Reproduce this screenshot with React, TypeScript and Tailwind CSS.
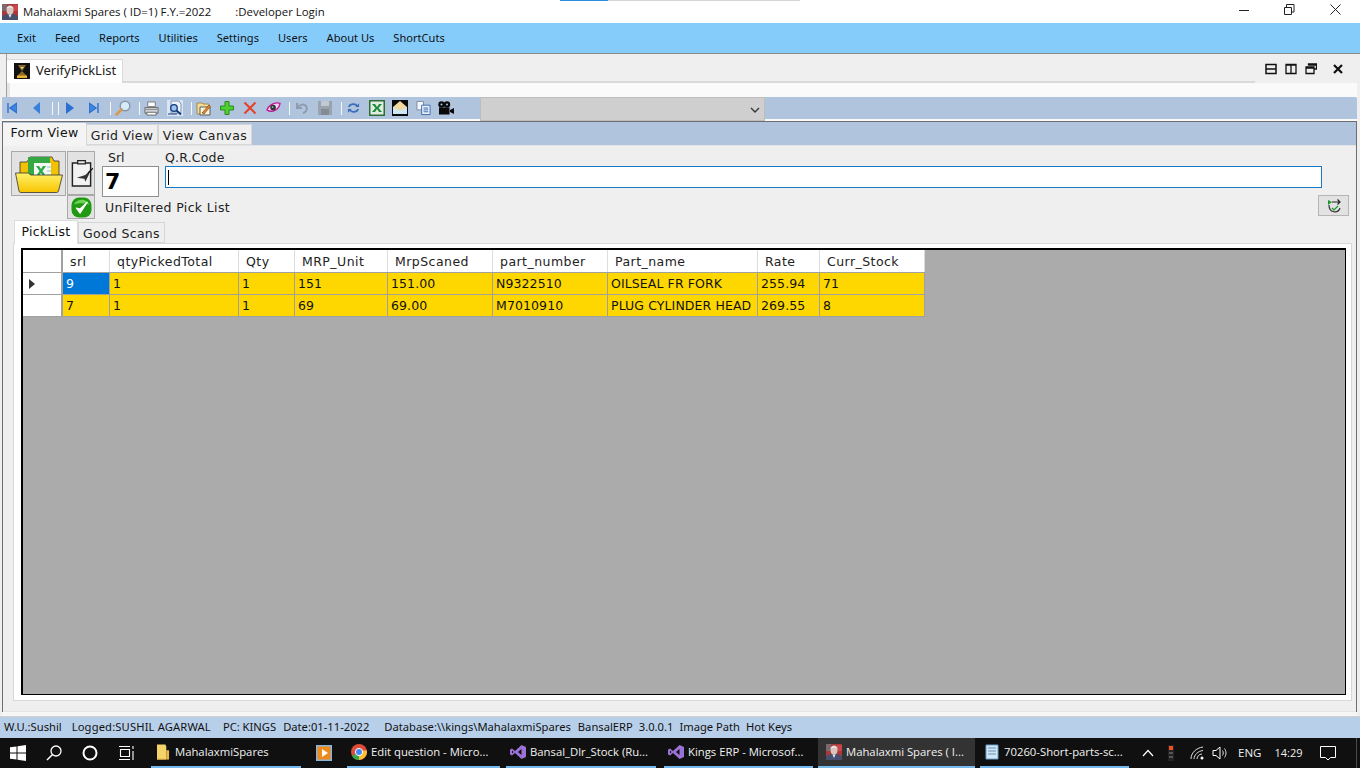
import React from "react";

const cols = [
  { t: "srl", w: "w-[47px]" },
  { t: "qtyPickedTotal", w: "w-[129px]" },
  { t: "Qty", w: "w-[56px]" },
  { t: "MRP_Unit", w: "w-[93px]" },
  { t: "MrpScaned", w: "w-[105px]" },
  { t: "part_number", w: "w-[115px]" },
  { t: "Part_name", w: "w-[150px]" },
  { t: "Rate", w: "w-[62px]" },
  { t: "Curr_Stock", w: "w-[105px]" },
];
const rows = [
  ["9", "1", "1", "151", "151.00", "N9322510", "OILSEAL FR FORK", "255.94", "71"],
  ["7", "1", "1", "69", "69.00", "M7010910", "PLUG CYLINDER HEAD", "269.55", "8"],
];
const menu = ["Exit", "Feed", "Reports", "Utilities", "Settings", "Users", "About Us", "ShortCuts"];

const Sep = ({ c }: { c: string }) => <div className={`w-px h-[13px] bg-[#f4f6fa] shrink-0 ${c}`} />;

const Face = ({ c }: { c?: string }) => (
  <svg viewBox="0 0 16 16" className={c}>
    <rect width="16" height="16" fill="#a8383a" />
    <rect x="0" y="0" width="5" height="7" fill="#7a6a70" />
    <rect x="11" y="1" width="5" height="6" fill="#c9474a" />
    <path d="M0 16v-4l5-2h6l5 2v4z" fill="#46506e" />
    <ellipse cx="8" cy="6" rx="3.5" ry="4.5" fill="#d8c4bc" />
    <path d="M4.5 4.5C5 1.5 11 1.5 11.5 4.5 9 3 7 3 4.5 4.5z" fill="#eee" />
    <path d="M6.5 10.5h3L8 14z" fill="#eee" />
  </svg>
);

const Taskbtn = ({ w, c, icon, text, active }: { w: string; c: string; icon: React.ReactNode; text: string; active?: boolean }) => (
  <div className={`h-[30px] shrink-0 flex items-center border-b-2 border-[#76b9ed] ${w} ${c} ${active ? "bg-[#333333]" : ""}`}>
    {icon}
    <span className="whitespace-nowrap ml-[4px] text-[11.3px] text-[#f2f2f2]">{text}</span>
  </div>
);

const VS = () => (
  <svg viewBox="0 0 16 16" className="w-[16px] h-[16px] ml-[4px] shrink-0">
    <path d="M11.5 1 16 3v10l-4.5 2L5 9l-3 2.5L0 10.5v-5L2 4.5 5 7zM11.5 5 8 8l3.5 3zM2 6.5v3L3.5 8z" fill="#9a72d6" />
  </svg>
);

export default function App() {
  return (
    <div className="w-[1360px] h-[768px] overflow-hidden flex flex-col bg-white text-black font-['Liberation_Sans',sans-serif]">
      {/* title bar */}
      <div className="h-[23px] shrink-0 bg-white flex relative">
        <div className="flex items-center h-[23px]">
          <Face c="w-[16px] h-[16px] ml-[2px]" />
          <span className="ml-[5px] text-[11.4px] font-['Open_Sans',sans-serif] text-[#111] whitespace-nowrap">Mahalaxmi Spares ( ID=1) F.Y.=2022</span>
          <span className="ml-[24px] text-[11.4px] font-['Open_Sans',sans-serif] text-[#111] whitespace-nowrap">:Developer Login</span>
        </div>
        <div className="absolute left-[560px] top-0 w-[48px] h-[1px] bg-[#2a8ce0]" />
        <div className="absolute left-[608px] top-0 w-[192px] h-[1px] bg-[#d4d4d4]" />
        <div className="ml-auto flex items-start pt-[3px] mr-[18px]">
          <svg viewBox="0 0 12 12" className="w-[12px] h-[12px] mr-[33px] mt-[1px]"><path d="M0 6.5h10" stroke="#222" strokeWidth="1" /></svg>
          <svg viewBox="0 0 12 12" className="w-[12px] h-[12px] mr-[34px] mt-[1px]"><path d="M.5 3.5h7v7h-7zM2.5 3.5V.5H10v7.500H7.500" fill="none" stroke="#222" /></svg>
          <svg viewBox="0 0 12 12" className="w-[12px] h-[12px] mt-[1px]"><path d="M.5.5l10 10M10.500.5l-10 10" stroke="#222" /></svg>
        </div>
      </div>
      {/* menu */}
      <div className="h-[31px] shrink-0 bg-[#85ccfb] border-b border-[#8a8a8a] flex items-center pl-[17px] gap-[19px] text-[11.1px] font-['Noto_Sans',sans-serif] text-[#111]">
        {menu.map((m) => (
          <span key={m} className="whitespace-nowrap">{m}</span>
        ))}
      </div>
      {/* MDI body */}
      <div className="flex-1 min-h-0 flex flex-col bg-[#efefef] pl-[2px] pr-[3px]">
        {/* document tab strip */}
        <div className="h-[29px] shrink-0 flex items-end ml-[4px] border-l border-[#a0a0a0]">
          <div className="w-[116px] h-[24px] bg-white border-t border-r border-[#d9d9d9] flex items-center">
            <svg viewBox="0 0 16 16" className="w-[16px] h-[16px] ml-[7px] -mt-[1px] shrink-0">
              <rect width="16" height="16" fill="#111" />
              <path d="M4 2h8L9 7l-1 1 1 1 3 3v1H4v-1l3-3 1-1-1-1z" fill="#8a6a2a" />
              <path d="M3 12.5h10V15H3z" fill="#e8b030" />
              <path d="M6 4h4L8 6z" fill="#e8d090" />
            </svg>
            <span className="ml-[6px] -mt-[1px] text-[13px] font-['Noto_Sans',sans-serif] text-[#222] whitespace-nowrap">VerifyPickList</span>
          </div>
          <div className="w-[1132px] h-[2px] bg-[#dadada]" />
          <div className="flex items-center self-start mt-[9px] ml-[10px]">
            <svg viewBox="0 0 12 12" className="w-[12px] h-[12px]"><path d="M1 1.500h10v9H1zM1 6h10" fill="none" stroke="#111" strokeWidth="1.500" /></svg>
            <svg viewBox="0 0 12 12" className="w-[12px] h-[12px] ml-[8px]"><path d="M1 1.500h10v9H1zM6 1.500v9M1 2h10" fill="none" stroke="#111" strokeWidth="1.300" /></svg>
            <svg viewBox="0 0 12 12" className="w-[12px] h-[12px] ml-[8px]"><path d="M3.500 2.500V1h8v5H9.500M1 4h8v6.500H1zM1 5h8M3.500 2h8" fill="none" stroke="#111" strokeWidth="1.300" /></svg>
            <svg viewBox="0 0 12 12" className="w-[12px] h-[12px] ml-[15px]"><path d="M2 2l8 8M10 2l-8 8" stroke="#111" strokeWidth="2.200" /></svg>
          </div>
        </div>
        <div className="h-[14px] shrink-0 bg-[#fafafa] ml-[4px] border-l border-[#a0a0a0] flex">
          <div className="w-[3px] h-full bg-[#e6e6e6]" />
        </div>
        {/* toolbar */}
        <div className="h-[22px] shrink-0 flex items-center bg-[#b0c4de] rounded-tr-[2px] pl-[5px] relative z-10">
          <svg viewBox="0 0 10 12" className="w-[10px] h-[12px] shrink-0"><path d="M1 1v10M10 1v10L3 6z" stroke="#2c6fd0" fill="#3f86e0" strokeWidth="1.400" /></svg>
          <svg viewBox="0 0 7 12" className="w-[7px] h-[12px] ml-[16px] shrink-0"><path d="M7 0v12L0 6z" fill="#3b7fdc" /></svg>
          <Sep c="ml-[12px]" />
          <Sep c="ml-[5px]" />
          <svg viewBox="0 0 8 12" className="w-[8px] h-[12px] ml-[7px] shrink-0"><path d="M0 0v12l8-6z" fill="#2c6fd0" /></svg>
          <svg viewBox="0 0 10 12" className="w-[10px] h-[12px] ml-[15px] shrink-0"><path d="M9 1v10M0 1v10l7-5z" stroke="#2c6fd0" fill="#3f86e0" strokeWidth="1.400" /></svg>
          <Sep c="ml-[11px]" />
          <svg viewBox="0 0 16 16" className="w-[16px] h-[16px] ml-[4px] shrink-0">
            <circle cx="10" cy="6" r="4.8" fill="#d6ecfb" stroke="#8a95a5" strokeWidth="1.400" />
            <path d="M6.5 9.500 1.500 14.500" stroke="#d89a4a" strokeWidth="2.600" strokeLinecap="round" />
          </svg>
          <Sep c="ml-[8px]" />
          <svg viewBox="0 0 16 16" className="w-[15px] h-[15px] ml-[4px] shrink-0">
            <path d="M4 1h8v5H4z" fill="#fff" stroke="#777" />
            <path d="M1 7h14v6H1z" fill="#cfd3d8" stroke="#666" />
            <path d="M3 12h10v3H3z" fill="#fff" stroke="#666" />
            <path d="M2 9h12" stroke="#888" />
          </svg>
          <div className="w-[16px] h-[16px] ml-[8px] bg-[#dce6f2] shrink-0 flex">
            <svg viewBox="0 0 16 16" className="w-[16px] h-[16px]">
              <path d="M4 1h8l2 3v9H4z" fill="#eef3fa" stroke="#7a94bc" />
              <circle cx="7" cy="8" r="3.300" fill="#9cc4ec" stroke="#123a7a" strokeWidth="1.300" />
              <path d="M9.500 10.500 14 14.500" stroke="#123a7a" strokeWidth="2" />
              <path d="M1 14h9" stroke="#123a7a" />
            </svg>
          </div>
          <Sep c="ml-[8px]" />
          <svg viewBox="0 0 16 16" className="w-[16px] h-[16px] ml-[4px] shrink-0">
            <path d="M1 3h5l1 1h6v10H1z" fill="#f6dd94" stroke="#a08a50" />
            <path d="M4 7h10v8H4z" fill="#fdf6dc" stroke="#5a5a5a" />
            <path d="M6 13 13 5l1.500 1.500L8 14z" fill="#e8862a" stroke="#6a3a10" strokeWidth=".6" />
          </svg>
          <svg viewBox="0 0 14 14" className="w-[14px] h-[14px] ml-[8px] shrink-0"><path d="M5 .5h4V5h4.500v4H9v4.500H5V9H.5V5H5z" fill="#4ed02e" stroke="#2a8a1a" /></svg>
          <svg viewBox="0 0 14 14" className="w-[14px] h-[14px] ml-[9px] shrink-0"><path d="M1.500 1.500l11 11M12.500 1.500l-11 11" stroke="#e8402a" strokeWidth="2" /></svg>
          <svg viewBox="0 0 16 14" className="w-[15px] h-[14px] ml-[9px] shrink-0">
            <path d="M1 9C3 3.500 10 .5 15 2c-1 6-8 11-14 7z" fill="#f2d2ec" stroke="#c2189a" strokeWidth="1.400" />
            <circle cx="7.500" cy="6.500" r="3" fill="#333" />
            <circle cx="7" cy="6" r="1" fill="#8ad0d0" />
          </svg>
          <Sep c="ml-[8px]" />
          <svg viewBox="0 0 12 12" className="w-[12px] h-[12px] ml-[6px] shrink-0"><path d="M1 1v5h5M1.500 5.500C4 2 9 1.500 10.500 5c1 3-1 5.500-3.500 6" fill="none" stroke="#8f9caf" strokeWidth="2" /></svg>
          <svg viewBox="0 0 14 14" className="w-[14px] h-[14px] ml-[10px] shrink-0">
            <path d="M0 0h14v14H0z" fill="#9aa2ad" />
            <path d="M3 0h8v5H3z" fill="#c3c9d1" />
            <path d="M3 8h8v6H3z" fill="#838b96" />
          </svg>
          <Sep c="ml-[9px]" />
          <svg viewBox="0 0 14 12" className="w-[13px] h-[12px] ml-[5px] shrink-0">
            <path d="M2 5C3 1.500 9 .5 11 4M12 7c-1 3.500-7 4.500-9 1" fill="none" stroke="#3b6cb8" strokeWidth="1.800" />
            <path d="M9 5h4V1zM5 7H1v4z" fill="#3b6cb8" />
          </svg>
          <svg viewBox="0 0 16 16" className="w-[16px] h-[16px] ml-[9px] shrink-0">
            <rect width="16" height="16" fill="#2f6b34" />
            <rect x="1.500" y="1.500" width="13" height="13" fill="#dfeee0" />
            <path d="M3 4h3l2 3 2-3h3l-3.500 4L13 12h-3L8 9l-2 3H3l3.500-4z" fill="#1e8a3a" />
          </svg>
          <svg viewBox="0 0 16 16" className="w-[16px] h-[16px] ml-[7px] shrink-0">
            <rect width="16" height="16" fill="#0a0a0a" />
            <path d="M1 7 8 1l7 6v7H1z" fill="#f0d8a0" />
            <path d="M1 14V7l7 4 7-4v7z" fill="#cfe6f6" />
          </svg>
          <svg viewBox="0 0 16 16" className="w-[15px] h-[16px] ml-[8px] shrink-0">
            <path d="M1 1h7v9H1z" fill="#f4f7fb" stroke="#7a8aa8" />
            <path d="M6 5h9v10H6z" fill="#e8f0fb" stroke="#3a68b0" />
            <path d="M8 8h5M8 10h5M8 12h5" stroke="#3a68b0" />
          </svg>
          <svg viewBox="0 0 16 14" className="w-[16px] h-[14px] ml-[7px] shrink-0">
            <circle cx="3.500" cy="3.500" r="3.200" fill="#0a0a0a" />
            <circle cx="9" cy="3.500" r="3.200" fill="#0a0a0a" />
            <circle cx="3.500" cy="3.500" r="1" fill="#b0c4de" />
            <circle cx="9" cy="3.500" r="1" fill="#b0c4de" />
            <rect x="1" y="6.500" width="10.500" height="7" fill="#0a0a0a" />
            <path d="M12 9l4-2v6l-4-2z" fill="#0a0a0a" />
          </svg>
          <div className="w-[285px] h-[24px] self-start ml-[26px] bg-[#cfcfcf] border border-[#bdbdbd] shrink-0 flex items-center justify-end pr-[4px]">
            <svg viewBox="0 0 10 6" className="w-[10px] h-[6px] mt-[2px]"><path d="M1 1l4 4 4-4" fill="none" stroke="#333" strokeWidth="1.300" /></svg>
          </div>
        </div>
        <div className="h-[2px] shrink-0 bg-[#fafafa]" />
        {/* outer tab control */}
        <div className="h-[591px] shrink-0 flex flex-col border-t border-l border-r border-[#6e6e6e] bg-[#efefef] font-['DejaVu_Sans',sans-serif]">
          <div className="h-[23px] shrink-0 bg-[#b0c4de] flex items-end text-[12.5px] tracking-[0.3px]">
            <div className="w-[83px] h-[23px] bg-[#f4f4f4] flex items-center justify-center -mb-px relative z-10">
              <span className="whitespace-nowrap -mt-[3px] text-[#111]">Form View</span>
            </div>
            <div className="w-[72px] h-[21px] bg-[#efefef] border border-[#d6d6d6] flex items-center justify-center pt-[3px]">
              <span className="whitespace-nowrap text-[#222]">Grid View</span>
            </div>
            <div className="w-[94px] h-[21px] bg-[#efefef] border border-[#d6d6d6] flex items-center justify-center pt-[3px]">
              <span className="whitespace-nowrap text-[#222] tracking-[0.45px]">View Canvas</span>
            </div>
          </div>
          {/* form */}
          <div className="flex-1 min-h-0 flex flex-col border-t border-[#e4e4e4] pl-[8px] border-b border-[#c4c4c4]">
            <div className="h-[74px] shrink-0 flex pt-[5px] pr-[7px]">
              <div className="w-[55px] h-[45px] shrink-0 bg-[#e2e2e2] border border-[#a9a9a9] flex items-center justify-center">
                <svg viewBox="0 0 48 38" className="w-[48px] h-[38px]">
                  <defs>
                    <linearGradient id="fold" x1="0" y1="0" x2="0" y2="1">
                      <stop offset="0" stopColor="#fff26a" />
                      <stop offset="1" stopColor="#f7c400" />
                    </linearGradient>
                  </defs>
                  <path d="M5 7h7l3-5h22l2 4h5v22H5z" fill="#f2c200" stroke="#333" strokeWidth=".8" />
                  <path d="M13 2h22v24H13z" fill="#35a845" />
                  <path d="M19 8h17v20H19z" fill="#f4f8f2" />
                  <path d="M21 11h3l2 3 2-3h3l-3.500 5 3.500 5h-3l-2-3-2 3h-3l3.500-5z" fill="#2fa84a" />
                  <path d="M32 12h4M32 16h4M32 20h4" stroke="#8ac8e0" />
                  <path d="M.5 18h13l2 2h32l-4 16a2 2 0 0 1-2 1.500H6a2 2 0 0 1-2-1.500z" fill="url(#fold)" stroke="#333" strokeWidth=".8" />
                </svg>
              </div>
              <div className="w-[28px] shrink-0 ml-[1px] flex flex-col">
                <div className="h-[44px] bg-[#e2e2e2] border border-[#a9a9a9] flex items-center justify-center">
                  <svg viewBox="0 0 24 30" className="w-[23px] h-[30px]">
                    <path d="M2.5 4.500h19v24h-19z" fill="#f2f2f2" stroke="#222" strokeWidth="1.500" />
                    <path d="M8 2h8v3.500H8z" fill="#e8e8e8" stroke="#222" strokeWidth="1.300" />
                    <path d="M22 11 16 17l-9 3 8 1 1 3 3-6z" fill="#333" />
                    <path d="M24 10l-5 5" stroke="#111" strokeWidth="1.200" />
                  </svg>
                </div>
                <div className="h-[24px] bg-[#e2e2e2] border border-[#a9a9a9] flex items-center justify-center">
                  <svg viewBox="0 0 22 22" className="w-[21px] h-[21px]">
                    <rect x=".5" y=".5" width="21" height="21" rx="8" fill="#1f9a12" />
                    <path d="M3 8C6 1 17 1 19 8 14 6 8 6 3 8z" fill="#6fd45a" />
                    <path d="M5.500 11.500 9.500 17 17 5.500l-7.500 7z" fill="#fff" stroke="#fff" strokeWidth="1.200" strokeLinejoin="round" />
                  </svg>
                </div>
              </div>
              <div className="flex-1 min-w-0 flex flex-col ml-[7px]">
                <div className="h-[46px] shrink-0 flex">
                  <div className="w-[57px] shrink-0 flex flex-col">
                    <span className="h-[15px] pl-[6px] -mt-[1px] mb-[1px] text-[12.5px] leading-[15px] text-[#222]">Srl</span>
                    <div className="h-[31px] bg-white border border-[#8f8f8f] flex items-center pl-[2px] text-[22px] font-bold text-black">7</div>
                  </div>
                  <div className="flex-1 min-w-0 flex flex-col ml-[6px] pr-[27px]">
                    <span className="h-[15px] -mt-[1px] mb-[1px] text-[12.5px] leading-[15px] text-[#222] tracking-[0.2px]">Q.R.Code</span>
                    <div className="h-[22px] bg-white border border-[#1a78c2] flex items-center pl-[2px]">
                      <div className="w-px h-[15px] bg-black" />
                    </div>
                  </div>
                </div>
                <div className="flex items-start -mt-[2px]">
                  <span className="ml-[3px] mt-[5px] text-[12.5px] leading-[15px] text-[#222] tracking-[0.35px]">UnFiltered Pick List</span>
                  <div className="ml-auto w-[31px] h-[21px] bg-[#e2e2e2] border border-[#b5b5b5] flex items-center justify-center">
                    <svg viewBox="0 0 16 16" className="w-[16px] h-[16px]">
                      <path d="M2 2v5L6 4z" fill="#1a9a2a" />
                      <path d="M6 4h8M11.500 1.500 14 4l-2.500 2.500" fill="none" stroke="#222" strokeWidth="1.200" />
                      <path d="M3 7c0 8 9 9 11 3" fill="none" stroke="#333" strokeWidth="1.200" />
                      <path d="M6 10l2 2 4-4" fill="none" stroke="#1a9a2a" strokeWidth="1.200" />
                    </svg>
                  </div>
                </div>
              </div>
            </div>
            {/* inner tabs */}
            <div className="h-[481px] shrink-0 flex flex-col mr-[4px] pl-[2px]">
              <div className="h-[23px] shrink-0 flex items-end text-[12.5px] tracking-[0.3px]">
                <div className="w-[64px] h-[24px] ml-[1px] bg-white border border-b-0 border-[#dcdcdc] flex items-center justify-center relative z-10 -mb-px">
                  <span className="whitespace-nowrap text-[#111]">PickList</span>
                </div>
                <div className="w-[87px] h-[21px] bg-[#efefef] border border-[#d6d6d6] flex items-center justify-center pt-[3px]">
                  <span className="whitespace-nowrap text-[#222]">Good Scans</span>
                </div>
              </div>
              <div className="h-[458px] shrink-0 bg-white border border-[#d8d8d8] pl-[7px] pr-[5px] pt-[4px] pb-[5px]">
                <div className="w-full h-full bg-[#ababab] border-2 border-black border-r-[1px] border-b-[1px]">
                  <div className="flex h-[22px] w-fit bg-white">
                    <div className="w-[40px] shrink-0 border-r-2 border-[#a0a0a0]" />
                    {cols.map((c) => (
                      <div key={c.t} className={`${c.w} shrink-0 border-r border-[#dddddd] pl-[7px] pt-[2px] flex items-center text-[12.5px] tracking-[0.45px] text-[#222] whitespace-nowrap`}>{c.t}</div>
                    ))}
                  </div>
                  {rows.map((r, i) => (
                    <div key={i} className="flex h-[22px]">
                      <div className="w-[40px] shrink-0 bg-white border-r-2 border-t border-[#a0a0a0] flex items-center pl-[6px]">
                        {i === 0 && <svg viewBox="0 0 6 10" className="w-[6px] h-[10px]"><path d="M0 0v10l6-5z" fill="#333" /></svg>}
                      </div>
                      {r.map((v, j) => (
                        <div
                          key={j}
                          className={`${cols[j].w} shrink-0 border-t border-r border-[#a0a0a0] pl-[3px] pt-[2px] flex items-center text-[12.5px] tracking-[0.1px] whitespace-nowrap overflow-hidden ${i === 0 && j === 0 ? "bg-[#0078d7] text-white" : "bg-[#ffd700] text-[#111]"}`}
                        >
                          {v}
                        </div>
                      ))}
                    </div>
                  ))}
                  <div className="h-px w-[902px] bg-[#a0a0a0]" />
                </div>
              </div>
            </div>
          </div>
        </div>
        <div className="flex-1 bg-[#f6f6f6]" />
      </div>
      {/* status bar */}
      <div className="h-[22px] shrink-0 bg-[#b8cfea] border-t border-[#d0d0d0] flex items-center text-[11.2px] font-['Noto_Sans',sans-serif] text-[#111] whitespace-nowrap">
        <span className="ml-[4px]">W.U.:Sushil</span>
        <span className="ml-[10px] tracking-[0.15px]">Logged:SUSHIL AGARWAL</span>
        <span className="ml-[12px]">PC: KINGS</span>
        <span className="ml-[7px]">Date:01-11-2022</span>
        <span className="ml-[15px]">Database:\\kings\MahalaxmiSpares</span>
        <span className="ml-[7px]">BansalERP</span>
        <span className="ml-[6px]">3.0.0.1</span>
        <span className="ml-[6px]">Image Path</span>
        <span className="ml-[6px]">Hot Keys</span>
      </div>
      {/* taskbar */}
      <div className="h-[30px] shrink-0 bg-[#101010] flex items-center font-['Open_Sans',sans-serif] text-white">
        <svg viewBox="0 0 16 16" className="w-[16px] h-[16px] ml-[10px] shrink-0"><path d="M0 2.300 6.500 1.400v6.100H0zM7.500 1.300 16 0v7.500H7.500zM0 8.500h6.500v6.100L0 13.700zM7.500 8.500H16V16l-8.500-1.300z" fill="#fff" /></svg>
        <svg viewBox="0 0 16 16" className="w-[16px] h-[16px] ml-[20px] shrink-0"><circle cx="10" cy="6" r="5" fill="none" stroke="#fff" strokeWidth="1.300" /><path d="M6.300 9.700 1 15" stroke="#fff" strokeWidth="1.500" /></svg>
        <svg viewBox="0 0 16 16" className="w-[16px] h-[16px] ml-[20px] shrink-0"><circle cx="8" cy="8" r="6.500" fill="none" stroke="#fff" strokeWidth="2" /></svg>
        <svg viewBox="0 0 16 16" className="w-[16px] h-[16px] ml-[20px] shrink-0"><path d="M2.500 4.500h9v7h-9zM1 1.500h11M1 14.500h11M15 1v3M15 6v9" fill="none" stroke="#fff" strokeWidth="1.100" /></svg>
        <Taskbtn
          w="w-[150px]"
          c="ml-[17px]"
          icon={<svg viewBox="0 0 14 16" className="w-[13px] h-[16px] ml-[6px] mr-[1px] shrink-0"><path d="M0 0h9l1 2v14H0z" fill="#f5d36b" /><path d="M10 6h3v10H0v-1h10z" fill="#e8b848" /></svg>}
          text="MahalaxmiSpares"
        />
        <svg viewBox="0 0 16 16" className="w-[16px] h-[16px] ml-[15px] shrink-0"><rect width="16" height="16" fill="#8ab4d8" /><rect x="1.500" y="1.500" width="13" height="13" fill="#ee8a1a" /><path d="M6 4v8l6-4z" fill="#fff" /></svg>
        <Taskbtn
          w="w-[153px]"
          c="ml-[15px]"
          icon={
            <svg viewBox="0 0 16 16" className="w-[16px] h-[16px] ml-[4px] shrink-0">
              <circle cx="8" cy="8" r="8" fill="#dd4b39" />
              <path d="M8 8 1 12a8 8 0 0 0 7 4z" fill="#2fa84f" />
              <path d="M8 16a8 8 0 0 0 7.800-9.500H8z" fill="#fbc02d" />
              <circle cx="8" cy="8" r="3.600" fill="#4285f4" stroke="#fff" />
            </svg>
          }
          text="Edit question - Micro..."
        />
        <Taskbtn w="w-[150px]" c="ml-[6px]" icon={<VS />} text="Bansal_Dlr_Stock (Ru..." />
        <Taskbtn w="w-[149px]" c="ml-[8px]" icon={<VS />} text="Kings ERP - Microsof..." />
        <Taskbtn w="w-[157px]" c="ml-[5px]" active icon={<Face c="w-[16px] h-[16px] ml-[8px] shrink-0" />} text="Mahalaxmi Spares ( I..." />
        <Taskbtn
          w="w-[149px]"
          c="ml-[5px]"
          icon={
            <svg viewBox="0 0 16 16" className="w-[16px] h-[16px] ml-[4px] shrink-0">
              <path d="M2 1h12v14H2z" fill="#cfe8f8" stroke="#6aa0c8" />
              <path d="M4 4h8M4 7h8M4 10h8" stroke="#6a90b0" />
            </svg>
          }
          text="70260-Short-parts-sc..."
        />
        <svg viewBox="0 0 12 8" className="w-[12px] h-[8px] ml-[13px] shrink-0"><path d="M1 7l5-5.500L11 7" fill="none" stroke="#fff" strokeWidth="1.200" /></svg>
        <svg viewBox="0 0 6 16" className="w-[6px] h-[16px] ml-[14px] shrink-0"><rect width="6" height="16" fill="#222" /><rect x="1" y="1" width="4" height="4" fill="#f0501e" /><path d="M1 8h4M1 12h4" stroke="#888" /></svg>
        <svg viewBox="0 0 14 14" className="w-[14px] h-[14px] ml-[16px] shrink-0"><path d="M1 13C1 7 6 2 13 1M4 13c0-4 4-8 9-8.500M7 13c0-2.500 2-5 5-5" fill="none" stroke="#ddd" /><circle cx="12" cy="12" r="1.500" fill="#fff" /></svg>
        <svg viewBox="0 0 16 14" className="w-[16px] h-[14px] ml-[8px] shrink-0"><path d="M1 4.500h3L8 1v12L4 9.500H1z" fill="none" stroke="#fff" /><path d="M10.500 4.500c1 1.500 1 3.500 0 5M12.500 2.500c2 3 2 6 0 9" fill="none" stroke="#ddd" /></svg>
        <span className="ml-[10px] text-[11.5px] text-[#eee] whitespace-nowrap">ENG</span>
        <span className="ml-[13px] text-[11px] text-[#eee] whitespace-nowrap">14:29</span>
        <svg viewBox="0 0 16 16" className="w-[16px] h-[16px] ml-[18px] shrink-0"><path d="M.5 1.500h15v11h-5l-2.500 2.500-2.500-2.500h-5z" fill="none" stroke="#fff" /></svg>
        <div className="w-px h-[30px] ml-[20px] bg-[#4a4a4a] shrink-0" />
      </div>
    </div>
  );
}
